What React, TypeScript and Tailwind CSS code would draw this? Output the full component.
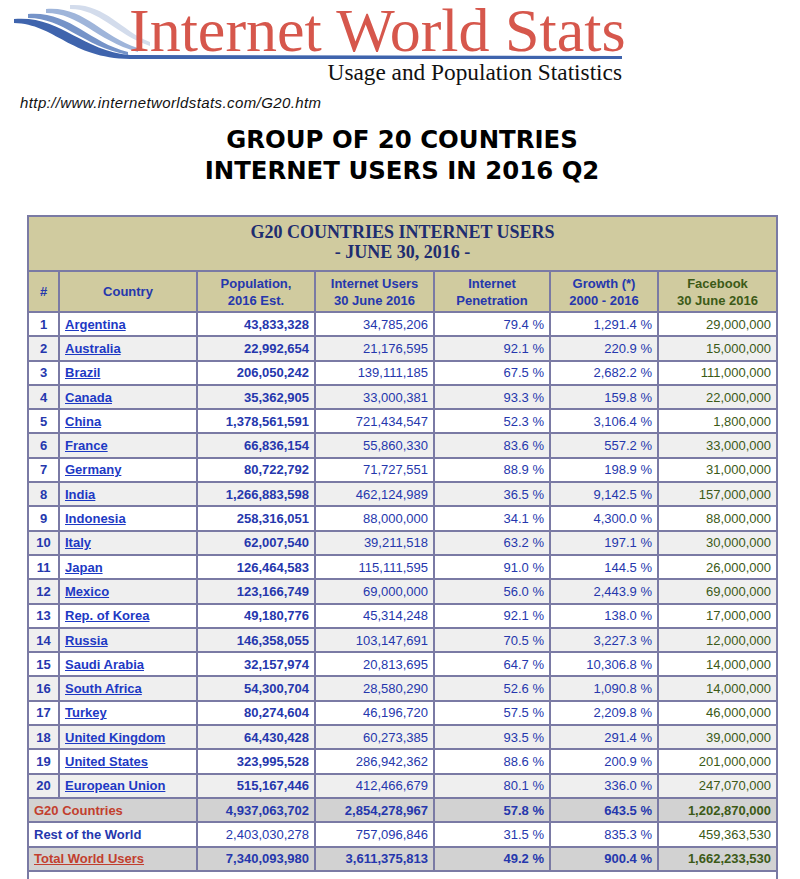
import React from "react";

type Row = [string, string, string, string, string, string, string];

const rows: Row[] = [
  ["1", "Argentina", "43,833,328", "34,785,206", "79.4 %", "1,291.4 %", "29,000,000"],
  ["2", "Australia", "22,992,654", "21,176,595", "92.1 %", "220.9 %", "15,000,000"],
  ["3", "Brazil", "206,050,242", "139,111,185", "67.5 %", "2,682.2 %", "111,000,000"],
  ["4", "Canada", "35,362,905", "33,000,381", "93.3 %", "159.8 %", "22,000,000"],
  ["5", "China", "1,378,561,591", "721,434,547", "52.3 %", "3,106.4 %", "1,800,000"],
  ["6", "France", "66,836,154", "55,860,330", "83.6 %", "557.2 %", "33,000,000"],
  ["7", "Germany", "80,722,792", "71,727,551", "88.9 %", "198.9 %", "31,000,000"],
  ["8", "India", "1,266,883,598", "462,124,989", "36.5 %", "9,142.5 %", "157,000,000"],
  ["9", "Indonesia", "258,316,051", "88,000,000", "34.1 %", "4,300.0 %", "88,000,000"],
  ["10", "Italy", "62,007,540", "39,211,518", "63.2 %", "197.1 %", "30,000,000"],
  ["11", "Japan", "126,464,583", "115,111,595", "91.0 %", "144.5 %", "26,000,000"],
  ["12", "Mexico", "123,166,749", "69,000,000", "56.0 %", "2,443.9 %", "69,000,000"],
  ["13", "Rep. of Korea", "49,180,776", "45,314,248", "92.1 %", "138.0 %", "17,000,000"],
  ["14", "Russia", "146,358,055", "103,147,691", "70.5 %", "3,227.3 %", "12,000,000"],
  ["15", "Saudi Arabia", "32,157,974", "20,813,695", "64.7 %", "10,306.8 %", "14,000,000"],
  ["16", "South Africa", "54,300,704", "28,580,290", "52.6 %", "1,090.8 %", "14,000,000"],
  ["17", "Turkey", "80,274,604", "46,196,720", "57.5 %", "2,209.8 %", "46,000,000"],
  ["18", "United Kingdom", "64,430,428", "60,273,385", "93.5 %", "291.4 %", "39,000,000"],
  ["19", "United States", "323,995,528", "286,942,362", "88.6 %", "200.9 %", "201,000,000"],
  ["20", "European Union", "515,167,446", "412,466,679", "80.1 %", "336.0 %", "247,070,000"],
];

const cell = "border-2 border-[#7a7aa4] px-[5px] h-[24.3px] leading-none";

function Logo() {
  return (
    <div className="relative h-[92px] w-[640px]">
      <svg className="absolute left-0 top-0" width="640" height="92" viewBox="0 0 640 92">
        <path d="M70 5 C105 3 120 30 150 42 L150 46 C115 34 100 9 70 9 Z" fill="#d3dcec" />
        <path d="M46 9 C85 6 100 36 138 48 L138 52 C95 40 80 13 46 13 Z" fill="#9fb5da" />
        <path d="M28 14 C70 11 88 42 128 52 L128 55 C82 46 64 18 28 18 Z" fill="#7593c8" />
        <path d="M14 19 C60 15 80 50 130 55 L622 56 L622 59 L130 59 C70 58 55 24 14 23 Z" fill="#3f64ad" />
      </svg>
      <div className="absolute left-[129px] top-[2px] text-[62px] leading-[56px] text-[#d6574c] font-['Liberation_Serif',serif] whitespace-nowrap">
        Internet World Stats
      </div>
      <div className="absolute right-[18px] top-[61px] text-[23.3px] leading-none text-[#111] font-['Liberation_Serif',serif] whitespace-nowrap">
        Usage and Population Statistics
      </div>
    </div>
  );
}

export default function App() {
  return (
    <div className="w-[800px] h-[879px] overflow-hidden bg-white font-['Liberation_Sans',Arial,sans-serif]">
      <Logo />
      <div className="pl-[20px] mt-[3px] text-[15px] tracking-[0.4px] italic leading-none text-[#111]">
        http://www.internetworldstats.com/G20.htm
      </div>
      <div className="mt-[14px] text-center pl-[4px] font-['DejaVu_Sans',Verdana,sans-serif] font-bold text-[24.4px] leading-[31px] text-black">
        <div>GROUP OF 20 COUNTRIES</div>
        <div>INTERNET USERS IN 2016 Q2</div>
      </div>
      <div className="mt-[29px] pl-[27px]">
        <table className="border-collapse border-2 border-[#7a7aa4] w-[749px] text-[13px] text-[#2537ad] table-fixed">
          <colgroup>
            <col className="w-[31px]" />
            <col className="w-[138px]" />
            <col className="w-[118px]" />
            <col className="w-[119px]" />
            <col className="w-[116px]" />
            <col className="w-[108px]" />
            <col className="w-[119px]" />
          </colgroup>
          <tbody>
            <tr className="bg-[#d0cb9f]">
              <td colSpan={7} className="border-2 border-[#7a7aa4] h-[55px] text-center font-['Liberation_Serif',serif] font-bold text-[18px] leading-[20px] text-[#1e2d70] pb-[3px]">
                <div>G20 COUNTRIES INTERNET USERS</div>
                <div>- JUNE 30, 2016 -</div>
              </td>
            </tr>
            <tr className="bg-[#d0cb9f] font-bold text-center leading-[17px]">
              <td className="border-2 border-[#7a7aa4] h-[41px]">#</td>
              <td className="border-2 border-[#7a7aa4]">Country</td>
              <td className="border-2 border-[#7a7aa4]">
                Population,
                <br />
                2016 Est.
              </td>
              <td className="border-2 border-[#7a7aa4]">
                Internet Users
                <br />
                30 June 2016
              </td>
              <td className="border-2 border-[#7a7aa4]">
                Internet
                <br />
                Penetration
              </td>
              <td className="border-2 border-[#7a7aa4]">
                Growth (*)
                <br />
                2000 - 2016
              </td>
              <td className="border-2 border-[#7a7aa4] text-[#3c5a17]">
                Facebook
                <br />
                30 June 2016
              </td>
            </tr>
            {rows.map((r, i) => (
              <tr key={r[0]} className={i % 2 === 0 ? "bg-white" : "bg-[#efefef]"}>
                <td className={`${cell} text-center font-bold`}>{r[0]}</td>
                <td className={`${cell} font-bold`}>
                  <a href="#" className="underline text-[#1d39c4]">
                    {r[1]}
                  </a>
                </td>
                <td className={`${cell} text-right font-bold`}>{r[2]}</td>
                <td className={`${cell} text-right`}>{r[3]}</td>
                <td className={`${cell} text-right`}>{r[4]}</td>
                <td className={`${cell} text-right`}>{r[5]}</td>
                <td className={`${cell} text-right text-[#3c5a17]`}>{r[6]}</td>
              </tr>
            ))}
            <tr className="bg-[#d2d2d2] font-bold">
              <td colSpan={2} className={`${cell} text-[#c23f2e]`}>
                G20 Countries
              </td>
              <td className={`${cell} text-right`}>4,937,063,702</td>
              <td className={`${cell} text-right`}>2,854,278,967</td>
              <td className={`${cell} text-right`}>57.8 %</td>
              <td className={`${cell} text-right`}>643.5 %</td>
              <td className={`${cell} text-right text-[#3c5a17]`}>1,202,870,000</td>
            </tr>
            <tr className="bg-white">
              <td colSpan={2} className={`${cell} font-bold`}>
                Rest of the World
              </td>
              <td className={`${cell} text-right`}>2,403,030,278</td>
              <td className={`${cell} text-right`}>757,096,846</td>
              <td className={`${cell} text-right`}>31.5 %</td>
              <td className={`${cell} text-right`}>835.3 %</td>
              <td className={`${cell} text-right text-[#3c5a17]`}>459,363,530</td>
            </tr>
            <tr className="bg-[#d2d2d2] font-bold">
              <td colSpan={2} className={cell}>
                <a href="#" className="underline text-[#c23f2e]">
                  Total World Users
                </a>
              </td>
              <td className={`${cell} text-right`}>7,340,093,980</td>
              <td className={`${cell} text-right`}>3,611,375,813</td>
              <td className={`${cell} text-right`}>49.2 %</td>
              <td className={`${cell} text-right`}>900.4 %</td>
              <td className={`${cell} text-right text-[#3c5a17]`}>1,662,233,530</td>
            </tr>
            <tr className="bg-white">
              <td colSpan={7} className="border-2 border-[#7a7aa4] h-[40px]"></td>
            </tr>
          </tbody>
        </table>
      </div>
    </div>
  );
}
